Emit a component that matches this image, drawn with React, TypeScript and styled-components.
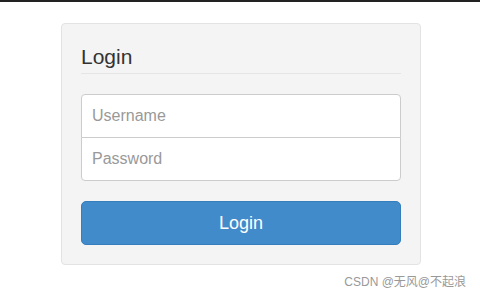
import React from "react";
import styled, { createGlobalStyle } from "styled-components";

const Global = createGlobalStyle`
  html, body { margin: 0; padding: 0; background: #fff; }
  body { font-family: "Liberation Sans", Arial, sans-serif; color: #333; }
  * { box-sizing: border-box; }
`;

const Page = styled.div`
  position: relative;
  width: 480px;
  height: 296px;
  border-top: 2px solid #222;
  padding-top: 21px;
  overflow: hidden;
`;

const Panel = styled.form`
  width: 360px;
  margin: 0 0 0 61px;
  padding: 19px;
  background: #f4f4f4;
  border: 1px solid #e3e3e3;
  border-radius: 4px;
  display: flex;
  flex-direction: column;
`;

const Heading = styled.h2`
  margin: 0 0 20px;
  font-size: 21px;
  font-weight: 400;
  line-height: 24px;
  color: #333;
  padding: 2px 0 4px;
  border-bottom: 1px solid #e5e5e5;
`;

const Field = styled.input<{ $pos: "top" | "bottom" }>`
  display: block;
  width: 320px;
  height: 44px;
  padding: 0 10px;
  font-family: "Liberation Sans", Arial, sans-serif;
  font-size: 16px;
  color: #555;
  background: #fff;
  border: 1px solid #ccc;
  outline: none;
  border-radius: ${(p) => (p.$pos === "top" ? "4px 4px 0 0" : "0 0 4px 4px")};
  margin-bottom: ${(p) => (p.$pos === "top" ? "-1px" : "0")};
  &::placeholder { color: #999; }
`;

const Button = styled.button`
  margin-top: 20px;
  width: 320px;
  height: 44px;
  font-family: "Liberation Sans", Arial, sans-serif;
  font-size: 18px;
  color: #fff;
  background: #428bca;
  border: 1px solid #357ebd;
  border-radius: 5px;
  cursor: pointer;
`;

const Watermark = styled.div`
  position: absolute;
  right: 14px;
  bottom: 7px;
  font-family: "Liberation Sans", "Noto Sans CJK SC", sans-serif;
  font-size: 12px;
  color: #999;
`;

export default function App() {
  return (
    <>
      <Global />
      <Page>
        <Panel onSubmit={(e) => e.preventDefault()}>
          <Heading>Login</Heading>
          <Field $pos="top" type="text" placeholder="Username" />
          <Field $pos="bottom" type="password" placeholder="Password" />
          <Button type="submit">Login</Button>
        </Panel>
        <Watermark>CSDN @无风@不起浪</Watermark>
      </Page>
    </>
  );
}
